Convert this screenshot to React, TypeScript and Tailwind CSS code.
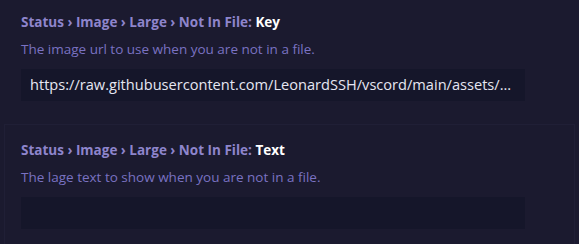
function Setting({
  name,
  desc,
  value,
  focused,
  first,
}: {
  name: string;
  desc: string;
  value: string;
  focused?: boolean;
  first?: boolean;
}) {
  return (
    <div
      className={
        "mx-[4px] pl-[16px] pt-[15px] pb-[22px] border " +
        (focused ? "border-[#201f36] " : "border-transparent ") +
        (first ? "-mt-[4px]" : "")
      }
    >
      <div className="text-[13.5px] font-bold leading-[20px] text-[#8e85cc] whitespace-nowrap">
        Status › Image › Large › Not In File: <span className="text-white">{name}</span>
      </div>
      <div className="mt-[7px] text-[13.5px] leading-[20px] text-[#7a72c2] whitespace-nowrap">{desc}</div>
      <div className="mt-[10px] w-[504px] h-[32px] bg-[#15162a] px-[9px] flex items-center text-[14.6px] text-[#e6e6f2] overflow-hidden whitespace-nowrap">
        {value}
      </div>
    </div>
  );
}

export default function App() {
  return (
    <div
      className="w-[579px] h-[244px] overflow-hidden bg-[#1b1a2f]"
      style={{ fontFamily: '"Open Sans", "Noto Sans", sans-serif' }}
    >
      <Setting
        first
        name="Key"
        desc="The image url to use when you are not in a file."
        value="https://raw.githubusercontent.com/LeonardSSH/vscord/main/assets/..."
      />
      <Setting
        focused
        name="Text"
        desc="The lage text to show when you are not in a file."
        value=""
      />
    </div>
  );
}
